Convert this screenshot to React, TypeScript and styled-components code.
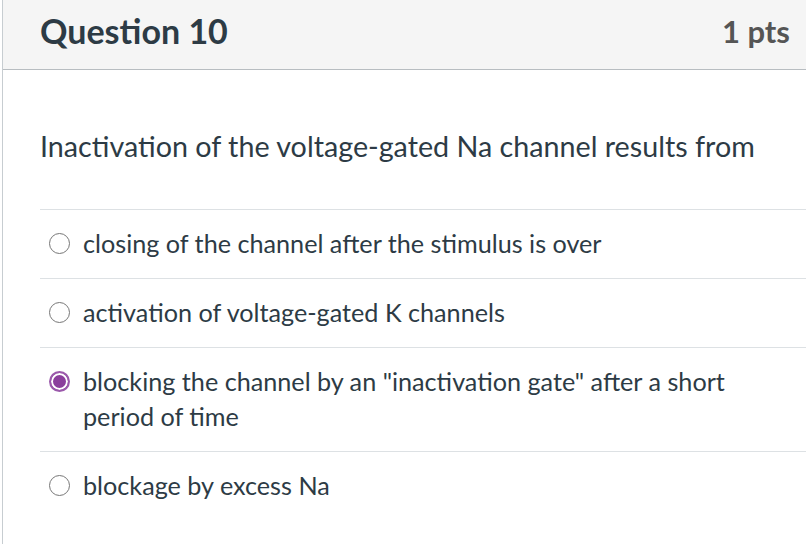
import styled, { createGlobalStyle } from "styled-components";

const GlobalStyle = createGlobalStyle`
  html, body {
    margin: 0;
    padding: 0;
    background: #fff;
  }
  body {
    font-family: Lato, "Open Sans", sans-serif;
    color: #2d3b45;
  }
`;

const QuestionCard = styled.div`
  margin-left: 2px;
  border-left: 1px solid #c7cdd1;
  min-height: 544px;
  box-sizing: border-box;
`;

const Header = styled.div`
  display: flex;
  justify-content: space-between;
  align-items: center;
  height: 70px;
  box-sizing: border-box;
  padding: 0 16px 8px 37px;
  background: #f5f5f5;
  border-bottom: 1px solid #b8bdc1;
`;

const Title = styled.h2`
  margin: 0;
  font-size: 34px;
  font-weight: bold;
  color: #2d3b45;
`;

const Points = styled.span`
  font-size: 31px;
  font-weight: bold;
  color: #555;
`;

const Body = styled.div`
  padding: 57px 0 0 37px;
`;

const QuestionText = styled.p`
  margin: 0 0 44px;
  font-size: 28.7px;
  line-height: 38px;
`;

const AnswerList = styled.div`
  display: flex;
  flex-direction: column;
`;

const AnswerRow = styled.label`
  display: flex;
  align-items: flex-start;
  gap: 13px;
  padding: 16px 0 17px 9px;
  border-top: 1px solid #dde1e4;
  font-size: 25.2px;
  line-height: 35px;
`;

const Radio = styled.span<{ $checked?: boolean }>`
  flex: none;
  margin-top: 7px;
  width: 21px;
  height: 21px;
  border-radius: 50%;
  box-sizing: border-box;
  border: ${(p) => (p.$checked ? "2px solid #9b59ab" : "1.5px solid #777")};
  background: ${(p) => (p.$checked ? "#8b3f9c" : "#fff")};
  box-shadow: ${(p) => (p.$checked ? "inset 0 0 0 2px #fff" : "none")};
`;

const AnswerText = styled.span`
  max-width: 680px;
`;

const answers = [
  { text: "closing of the channel after the stimulus is over" },
  { text: "activation of voltage-gated K channels" },
  {
    text: 'blocking the channel by an "inactivation gate" after a short period of time',
    checked: true,
  },
  { text: "blockage by excess Na" },
];

function App() {
  return (
    <>
      <GlobalStyle />
      <QuestionCard>
        <Header>
          <Title>Question 10</Title>
          <Points>1 pts</Points>
        </Header>
        <Body>
          <QuestionText>
            Inactivation of the voltage-gated Na channel results from
          </QuestionText>
          <AnswerList>
            {answers.map((a) => (
              <AnswerRow key={a.text}>
                <Radio $checked={a.checked} />
                <AnswerText>{a.text}</AnswerText>
              </AnswerRow>
            ))}
          </AnswerList>
        </Body>
      </QuestionCard>
    </>
  );
}

export default App;
